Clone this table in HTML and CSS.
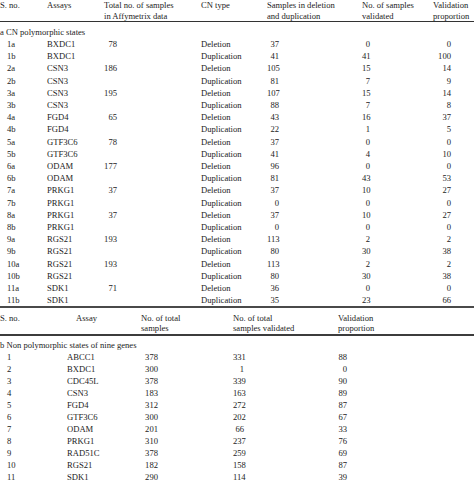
FILE: index.html
```html
<!DOCTYPE html>
<html>
<head>
<meta charset="utf-8">
<link rel="stylesheet" href="styles.css">
</head>
<body>
<div class="page">
<table class="t t1">
<colgroup>
<col class="a1"><col class="a2"><col class="a3"><col class="a4"><col class="a5"><col class="a6"><col class="a7">
</colgroup>
<thead>
<tr><th>S. no.</th><th>Assays</th><th>Total no. of samples<br>in Affymetrix data</th><th>CN type</th><th>Samples in deletion<br>and duplication</th><th>No. of samples<br>validated</th><th>Validation<br>proportion</th></tr>
</thead>
<tbody>
<tr class="grp"><td colspan="7">a CN polymorphic states</td></tr>
<tr><td class="sn">1a</td><td>BXDC1</td><td><span class="n n3">78</span></td><td>Deletion</td><td><span class="n n5">37</span></td><td><span class="n n6">0</span></td><td><span class="n n7">0</span></td></tr>
<tr><td class="sn">1b</td><td>BXDC1</td><td></td><td>Duplication</td><td><span class="n n5">41</span></td><td><span class="n n6">41</span></td><td><span class="n n7">100</span></td></tr>
<tr><td class="sn">2a</td><td>CSN3</td><td><span class="n n3">186</span></td><td>Deletion</td><td><span class="n n5">105</span></td><td><span class="n n6">15</span></td><td><span class="n n7">14</span></td></tr>
<tr><td class="sn">2b</td><td>CSN3</td><td></td><td>Duplication</td><td><span class="n n5">81</span></td><td><span class="n n6">7</span></td><td><span class="n n7">9</span></td></tr>
<tr><td class="sn">3a</td><td>CSN3</td><td><span class="n n3">195</span></td><td>Deletion</td><td><span class="n n5">107</span></td><td><span class="n n6">15</span></td><td><span class="n n7">14</span></td></tr>
<tr><td class="sn">3b</td><td>CSN3</td><td></td><td>Duplication</td><td><span class="n n5">88</span></td><td><span class="n n6">7</span></td><td><span class="n n7">8</span></td></tr>
<tr><td class="sn">4a</td><td>FGD4</td><td><span class="n n3">65</span></td><td>Deletion</td><td><span class="n n5">43</span></td><td><span class="n n6">16</span></td><td><span class="n n7">37</span></td></tr>
<tr><td class="sn">4b</td><td>FGD4</td><td></td><td>Duplication</td><td><span class="n n5">22</span></td><td><span class="n n6">1</span></td><td><span class="n n7">5</span></td></tr>
<tr><td class="sn">5a</td><td>GTF3C6</td><td><span class="n n3">78</span></td><td>Deletion</td><td><span class="n n5">37</span></td><td><span class="n n6">0</span></td><td><span class="n n7">0</span></td></tr>
<tr><td class="sn">5b</td><td>GTF3C6</td><td></td><td>Duplication</td><td><span class="n n5">41</span></td><td><span class="n n6">4</span></td><td><span class="n n7">10</span></td></tr>
<tr><td class="sn">6a</td><td>ODAM</td><td><span class="n n3">177</span></td><td>Deletion</td><td><span class="n n5">96</span></td><td><span class="n n6">0</span></td><td><span class="n n7">0</span></td></tr>
<tr><td class="sn">6b</td><td>ODAM</td><td></td><td>Duplication</td><td><span class="n n5">81</span></td><td><span class="n n6">43</span></td><td><span class="n n7">53</span></td></tr>
<tr><td class="sn">7a</td><td>PRKG1</td><td><span class="n n3">37</span></td><td>Deletion</td><td><span class="n n5">37</span></td><td><span class="n n6">10</span></td><td><span class="n n7">27</span></td></tr>
<tr><td class="sn">7b</td><td>PRKG1</td><td></td><td>Duplication</td><td><span class="n n5">0</span></td><td><span class="n n6">0</span></td><td><span class="n n7">0</span></td></tr>
<tr><td class="sn">8a</td><td>PRKG1</td><td><span class="n n3">37</span></td><td>Deletion</td><td><span class="n n5">37</span></td><td><span class="n n6">10</span></td><td><span class="n n7">27</span></td></tr>
<tr><td class="sn">8b</td><td>PRKG1</td><td></td><td>Duplication</td><td><span class="n n5">0</span></td><td><span class="n n6">0</span></td><td><span class="n n7">0</span></td></tr>
<tr><td class="sn">9a</td><td>RGS21</td><td><span class="n n3">193</span></td><td>Deletion</td><td><span class="n n5">113</span></td><td><span class="n n6">2</span></td><td><span class="n n7">2</span></td></tr>
<tr><td class="sn">9b</td><td>RGS21</td><td></td><td>Duplication</td><td><span class="n n5">80</span></td><td><span class="n n6">30</span></td><td><span class="n n7">38</span></td></tr>
<tr><td class="sn">10a</td><td>RGS21</td><td><span class="n n3">193</span></td><td>Deletion</td><td><span class="n n5">113</span></td><td><span class="n n6">2</span></td><td><span class="n n7">2</span></td></tr>
<tr><td class="sn">10b</td><td>RGS21</td><td></td><td>Duplication</td><td><span class="n n5">80</span></td><td><span class="n n6">30</span></td><td><span class="n n7">38</span></td></tr>
<tr><td class="sn">11a</td><td>SDK1</td><td><span class="n n3">71</span></td><td>Deletion</td><td><span class="n n5">36</span></td><td><span class="n n6">0</span></td><td><span class="n n7">0</span></td></tr>
<tr class="last"><td class="sn">11b</td><td>SDK1</td><td></td><td>Duplication</td><td><span class="n n5">35</span></td><td><span class="n n6">23</span></td><td><span class="n n7">66</span></td></tr>
</tbody>
</table>

<table class="t t2">
<colgroup>
<col class="b1"><col class="b2"><col class="b3"><col class="b4"><col class="b5">
</colgroup>
<thead>
<tr><th>S. no.</th><th class="assay">Assay</th><th>No. of total<br>samples</th><th>No. of total<br>samples validated</th><th>Validation<br>proportion</th></tr>
</thead>
<tbody>
<tr class="grp"><td colspan="5">b Non polymorphic states of nine genes</td></tr>
<tr><td class="sn">1</td><td>ABCC1</td><td><span class="n m3">378</span></td><td><span class="n m4">331</span></td><td><span class="n m5">88</span></td></tr>
<tr><td class="sn">2</td><td>BXDC1</td><td><span class="n m3">300</span></td><td><span class="n m4">1</span></td><td><span class="n m5">0</span></td></tr>
<tr><td class="sn">3</td><td>CDC45L</td><td><span class="n m3">378</span></td><td><span class="n m4">339</span></td><td><span class="n m5">90</span></td></tr>
<tr><td class="sn">4</td><td>CSN3</td><td><span class="n m3">183</span></td><td><span class="n m4">163</span></td><td><span class="n m5">89</span></td></tr>
<tr><td class="sn">5</td><td>FGD4</td><td><span class="n m3">312</span></td><td><span class="n m4">272</span></td><td><span class="n m5">87</span></td></tr>
<tr><td class="sn">6</td><td>GTF3C6</td><td><span class="n m3">300</span></td><td><span class="n m4">202</span></td><td><span class="n m5">67</span></td></tr>
<tr><td class="sn">7</td><td>ODAM</td><td><span class="n m3">201</span></td><td><span class="n m4">66</span></td><td><span class="n m5">33</span></td></tr>
<tr><td class="sn">8</td><td>PRKG1</td><td><span class="n m3">310</span></td><td><span class="n m4">237</span></td><td><span class="n m5">76</span></td></tr>
<tr><td class="sn">9</td><td>RAD51C</td><td><span class="n m3">378</span></td><td><span class="n m4">259</span></td><td><span class="n m5">69</span></td></tr>
<tr><td class="sn">10</td><td>RGS21</td><td><span class="n m3">182</span></td><td><span class="n m4">158</span></td><td><span class="n m5">87</span></td></tr>
<tr><td class="sn">11</td><td>SDK1</td><td><span class="n m3">290</span></td><td><span class="n m4">114</span></td><td><span class="n m5">39</span></td></tr>
</tbody>
</table>
</div>
</body>
</html>
```

FILE: styles.css
```css
html, body {
  margin: 0;
  padding: 0;
  background: #ffffff;
  overflow: hidden;
}

.page {
  width: 474px;
  height: 482px;
  overflow: hidden;
  font-family: "Liberation Serif", "Times New Roman", serif;
  font-size: 8.6px;
  color: #222222;
}

.t {
  width: 520px;
  table-layout: fixed;
  border-collapse: collapse;
  border-spacing: 0;
}

.t th,
.t td {
  padding: 0;
  font-weight: normal;
  text-align: left;
  vertical-align: top;
  white-space: nowrap;
  overflow: visible;
}

.t th {
  line-height: 10.5px;
}

.t td {
  line-height: 12.2px;
  height: 12.2px;
}

.t1 thead tr {
  border-bottom: 1px solid #333333;
}

.t1 thead th {
  height: 21px;
}

.grp td {
  padding-top: 3.8px;
}

.sn {
  padding-left: 7px !important;
}

.t1 .last td {
  border-bottom: 2.5px solid #4a4a4a;
}

.t2 thead th {
  padding-top: 4.5px;
  height: 21px;
  border-bottom: 2px solid #3c3c3c;
}

.t2 .grp td {
  padding-top: 3.5px;
}

.t2 td {
  line-height: 12px;
  height: 12px;
}

.assay {
  padding-left: 9px !important;
}

.n {
  display: inline-block;
  text-align: right;
}

.a1 { width: 47px; }
.a2 { width: 57px; }
.a3 { width: 97px; }
.a4 { width: 66px; }
.a5 { width: 95px; }
.a6 { width: 71px; }
.a7 { width: 87px; }

.n3 { width: 13px; }
.n5 { width: 12px; }
.n6 { width: 8px; }
.n7 { width: 18px; }

.b1 { width: 67px; }
.b2 { width: 74px; }
.b3 { width: 92px; }
.b4 { width: 105px; }
.b5 { width: 182px; }

.m3 { width: 17px; }
.m4 { width: 11px; }
.m5 { width: 9px; }
```
